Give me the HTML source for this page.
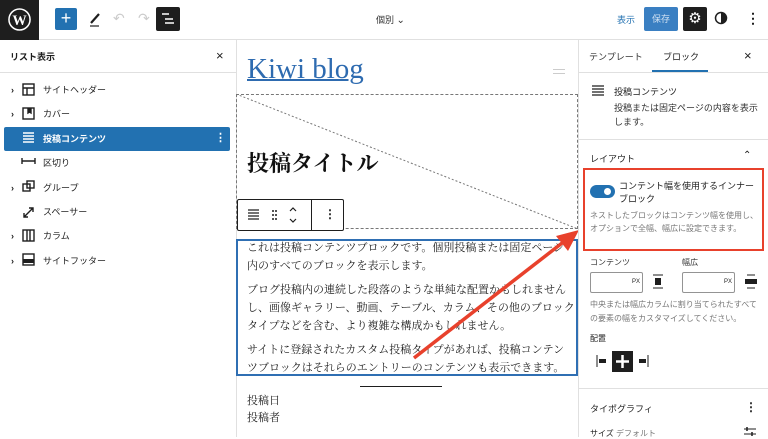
<!DOCTYPE html><html><head><meta charset="utf-8"><style>
*{box-sizing:border-box;margin:0;padding:0}
body{width:768px;height:437px;overflow:hidden;background:#fff;font-family:"Liberation Sans","Noto Sans CJK JP",sans-serif;color:#1e1e1e;position:relative}
.a{position:absolute}
.s{font-size:9px}
.serif{font-family:"Liberation Serif","Noto Serif CJK SC",serif}
</style></head><body>
<!-- top bar -->
<div class="a" style="left:0;top:0;width:768px;height:40px;border-bottom:1px solid #e0e0e0"></div>
<div class="a" style="left:0;top:0;width:39px;height:40px;background:#1e1e1e"></div>
<svg class="a" style="left:8px;top:8px" width="23" height="23" viewBox="0 0 24 24"><circle cx="12" cy="12" r="11" fill="none" stroke="#fff" stroke-width="1.6"/><text x="12" y="17.5" text-anchor="middle" font-family="Liberation Serif" font-weight="bold" font-size="15" fill="#fff">W</text></svg>
<div class="a" style="left:55px;top:8px;width:22px;height:22px;background:#2271b1;border-radius:2px;color:#fff;font-size:18px;line-height:21px;text-align:center">+</div>
<svg class="a" style="left:88px;top:11px" width="14" height="16"><path d="M3 12 L11 3" stroke="#1e1e1e" stroke-width="2.2"/><path d="M2 15h9" stroke="#1e1e1e" stroke-width="1.2"/></svg>
<div class="a" style="left:113px;top:10px;color:#ccc;font-size:14px">↶</div>
<div class="a" style="left:138px;top:10px;color:#ccc;font-size:14px">↷</div>
<div class="a" style="left:156px;top:7px;width:24px;height:24px;background:#1e1e1e;border-radius:2px"></div>
<svg class="a" style="left:160px;top:11px" width="16" height="16"><path d="M2 3h7M5 8h8M5 12h9" stroke="#fff" stroke-width="1.5"/></svg>
<div class="a s" style="left:376px;top:13px;color:#333">個別 <span style="font-size:10px">⌄</span></div>
<div class="a s" style="left:617px;top:13px;color:#2271b1">表示</div>
<div class="a s" style="left:644px;top:7px;width:34px;height:24px;background:#3a7fc2;color:#cfe0f2;line-height:24px;text-align:center;border-radius:2px">保存</div>
<div class="a" style="left:683px;top:7px;width:24px;height:24px;background:#1e1e1e;border-radius:2px;color:#fff;text-align:center;line-height:24px;font-size:15px">⚙</div>
<svg class="a" style="left:714px;top:11px" width="14" height="14"><circle cx="7" cy="7" r="5.5" fill="none" stroke="#1e1e1e" stroke-width="1.5"/><path d="M7 1.5a5.5 5.5 0 0 1 0 11z" fill="#1e1e1e"/></svg>
<div class="a" style="left:746px;top:10px;font-size:14px;font-weight:bold">⋮</div>
<!-- left panel -->
<div class="a" style="left:236px;top:40px;width:1px;height:397px;background:#e0e0e0"></div>
<div class="a s" style="left:10px;top:50px;font-weight:bold">リスト表示</div>
<div class="a" style="left:216px;top:48px;font-size:13px">×</div>
<div class="a" style="left:0;top:72px;width:236px;height:1px;background:#e0e0e0"></div>
<div class="a" style="left:4px;top:127px;width:226px;height:24px;background:#2271b1;border-radius:2px"></div>
<div class="a s" style="left:43px;top:78px;line-height:24.4px;color:#1e1e1e">サイトヘッダー<br>カバー<br><span style="color:#fff;font-weight:bold">投稿コンテンツ</span><br>区切り<br>グループ<br>スペーサー<br>カラム<br>サイトフッター</div>
<div class="a" style="left:11px;top:78px;line-height:24.4px;font-size:9px;font-weight:bold">›<br>›<br><br><br>›<br><br>›<br>›</div>
<svg class="a" style="left:21px;top:82px" width="16" height="190" fill="none" stroke="#1e1e1e" stroke-width="1.4">
<rect x="2" y="2" width="11" height="11"/><path d="M2 6h11M6 6v7"/>
<rect x="2" y="26" width="11" height="11"/><path d="M7 26v5l1.5-1 1.5 1v-5" fill="#1e1e1e"/>
<path d="M2 51h11M2 54h11M2 57h11M2 60h11" stroke="#fff"/>
<path d="M1 79h13M1 76v6M14 76v6"/>
<rect x="2" y="102" width="7" height="7"/><rect x="6" y="99" width="7" height="7"/>
<path d="M3 135l9-9M8 126h4v4M3 131v4h4"/>
<rect x="2" y="148" width="11" height="11"/><path d="M6 148v11M9 148v11"/>
<rect x="2" y="172" width="11" height="11"/><path d="M2 179h11" stroke-width="4"/>
</svg>
<div class="a" style="left:215px;top:131px;color:#fff;font-size:11px;font-weight:bold">⋮</div>
<!-- canvas -->
<div class="a serif" style="left:247px;top:53px;font-size:29px;color:#2e6bb0;text-decoration:underline;text-decoration-thickness:2px">Kiwi blog</div>
<div class="a" style="left:553px;top:69px;width:12px;height:1px;background:#ccc;box-shadow:0 4px 0 #ccc"></div>
<div class="a" style="left:236px;top:94px;width:342px;height:135px;border:1px dashed #777"></div>
<svg class="a" style="left:236px;top:94px" width="342" height="135"><path d="M0 0L342 135" stroke="#777" stroke-dasharray="2 2"/></svg>
<div class="a serif" style="left:247px;top:147px;font-size:22px;font-weight:bold;color:#111">投稿タイトル</div>
<div class="a" style="left:237px;top:199px;width:107px;height:32px;background:#fff;border:1px solid #1e1e1e;border-radius:2px"></div>
<div class="a" style="left:311px;top:199px;width:1px;height:32px;background:#1e1e1e"></div>
<svg class="a" style="left:246px;top:206px" width="60" height="18" fill="none" stroke="#1e1e1e" stroke-width="1.2"><path d="M2 4h11M2 7h11M2 10h11M2 13h11"/><g fill="#1e1e1e" stroke="none"><circle cx="27" cy="5" r="1"/><circle cx="30" cy="5" r="1"/><circle cx="27" cy="9" r="1"/><circle cx="30" cy="9" r="1"/><circle cx="27" cy="13" r="1"/><circle cx="30" cy="13" r="1"/></g><path d="M44 5l3-3 3 3M44 13l3 3 3-3"/></svg>
<div class="a" style="left:324px;top:207px;font-size:12px;font-weight:bold">⋮</div>
<div class="a" style="left:236px;top:239px;width:342px;height:137px;border:2px solid #2f6fb3"></div>
<div class="a serif" style="left:247px;top:239px;font-size:11px;line-height:18px;color:#1e1e1e;white-space:nowrap">これは投稿コンテンツブロックです。個別投稿または固定ページ<br>内のすべてのブロックを表示します。<div style="height:6px"></div>ブログ投稿内の連続した段落のような単純な配置かもしれません<br>し、画像ギャラリー、動画、テーブル、カラム、その他のブロック<br>タイプなどを含む、より複雑な構成かもしれません。<div style="height:6px"></div>サイトに登録されたカスタム投稿タイプがあれば、投稿コンテン<br>ツブロックはそれらのエントリーのコンテンツも表示できます。</div>
<div class="a" style="left:360px;top:386px;width:82px;height:1px;background:#1e1e1e"></div>
<div class="a serif" style="left:247px;top:393px;font-size:11px;line-height:17px">投稿日<br>投稿者</div>
<!-- arrow -->
<svg class="a" style="left:0;top:0" width="768" height="437"><path d="M414 358L566 240" stroke="#e8412c" stroke-width="3.5"/><path d="M579 230L556 236L568 251Z" fill="#e8412c"/></svg>
<!-- right panel -->
<div class="a" style="left:578px;top:40px;width:1px;height:397px;background:#e0e0e0"></div>
<div class="a s" style="left:589px;top:50px;color:#333">テンプレート</div>
<div class="a s" style="left:663px;top:50px;color:#1e1e1e">ブロック</div>
<div class="a" style="left:652px;top:70px;width:56px;height:2px;background:#2271b1"></div>
<div class="a" style="left:744px;top:48px;font-size:13px">×</div>
<div class="a" style="left:579px;top:72px;width:189px;height:1px;background:#e0e0e0"></div>
<svg class="a" style="left:591px;top:84px" width="14" height="14"><path d="M1 2h12M1 5h12M1 8h12M1 11h12" stroke="#1e1e1e" stroke-width="1.2"/></svg>
<div class="a s" style="left:614px;top:85px">投稿コンテンツ</div>
<div class="a s" style="left:614px;top:101px;width:150px;line-height:14px;color:#333">投稿または固定ページの内容を表示します。</div>
<div class="a" style="left:579px;top:139px;width:189px;height:1px;background:#e0e0e0"></div>
<div class="a s" style="left:590px;top:152px">レイアウト</div>
<div class="a" style="left:743px;top:150px;font-size:10px">⌃</div>
<div class="a" style="left:583px;top:168px;width:181px;height:83px;border:2px solid #e8412c"></div>
<div class="a" style="left:590px;top:185px;width:25px;height:13px;background:#2271b1;border-radius:7px"></div>
<div class="a" style="left:604px;top:188px;width:7px;height:7px;background:#fff;border-radius:50%"></div>
<div class="a s" style="left:619px;top:180px;line-height:13px;width:142px">コンテント幅を使用するインナーブロック</div>
<div class="a" style="left:590px;top:210px;width:170px;font-size:8px;line-height:12.5px;color:#777">ネストしたブロックはコンテンツ幅を使用し、オプションで全幅、幅広に設定できます。</div>
<div class="a" style="left:590px;top:257px;font-size:8px;color:#333">コンテンツ</div>
<div class="a" style="left:682px;top:257px;font-size:8px;color:#333">幅広</div>
<div class="a" style="left:590px;top:272px;width:53px;height:21px;border:1px solid #949494;border-radius:2px"></div>
<div class="a" style="left:682px;top:272px;width:53px;height:21px;border:1px solid #949494;border-radius:2px"></div>
<div class="a" style="left:632px;top:279px;font-size:6px">PX</div>
<div class="a" style="left:724px;top:279px;font-size:6px">PX</div>
<svg class="a" style="left:652px;top:274px" width="12" height="16"><path d="M1 1h10M1 14h10" stroke="#1e1e1e"/><rect x="3" y="4" width="6" height="7" fill="#1e1e1e"/></svg>
<svg class="a" style="left:744px;top:274px" width="14" height="16"><path d="M3 1h8M3 14h8" stroke="#1e1e1e"/><rect x="1" y="5" width="12" height="5" fill="#1e1e1e"/></svg>
<div class="a" style="left:590px;top:298px;width:172px;font-size:8px;line-height:13.5px;color:#777">中央または幅広カラムに割り当てられたすべての要素の幅をカスタマイズしてください。</div>
<div class="a" style="left:590px;top:333px;font-size:8px">配置</div>
<svg class="a" style="left:596px;top:350px" width="56" height="23"><path d="M1 5v12" stroke="#1e1e1e"/><rect x="3" y="9" width="7" height="4" fill="#1e1e1e"/><rect x="16" y="1" width="21" height="21" fill="#1e1e1e"/><path d="M20 11.5h13M26.5 5v13" stroke="#fff" stroke-width="2.5"/><rect x="43" y="9" width="7" height="4" fill="#1e1e1e"/><path d="M52 5v12" stroke="#1e1e1e"/></svg>
<div class="a" style="left:579px;top:388px;width:189px;height:1px;background:#e0e0e0"></div>
<div class="a s" style="left:590px;top:402px">タイポグラフィ</div>
<div class="a" style="left:745px;top:400px;font-size:12px;font-weight:bold">⋮</div>
<div class="a" style="left:590px;top:428px;font-size:8px">サイズ <span style="color:#777">デフォルト</span></div>
<svg class="a" style="left:743px;top:427px" width="14" height="10"><path d="M1 2h12M1 7h12" stroke="#1e1e1e"/><path d="M4 0v4M9 5v4" stroke="#1e1e1e" stroke-width="1.5"/></svg>
</body></html>
